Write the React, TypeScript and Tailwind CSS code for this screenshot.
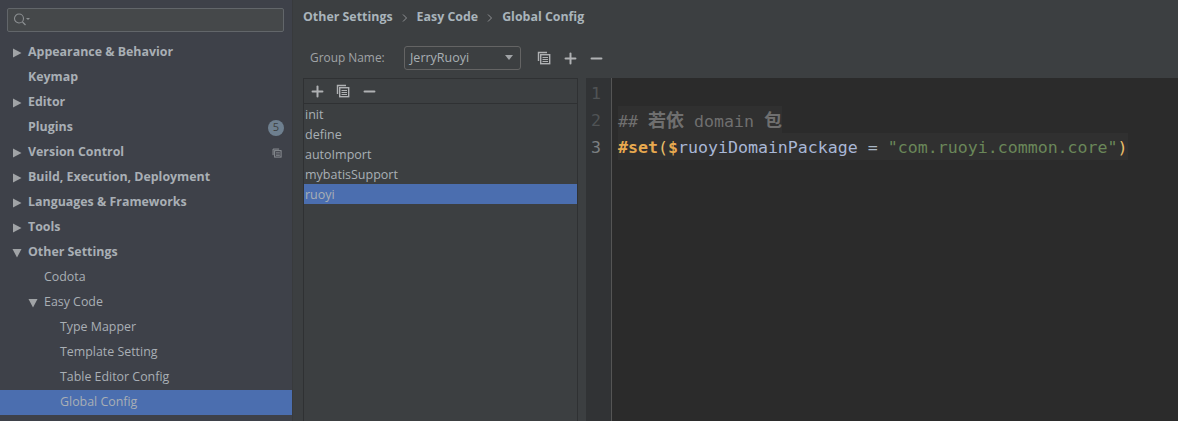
import { Minus, Plus } from 'lucide-react';

const ui = "font-['Open_Sans','Noto_Sans',sans-serif]";

function Arrow({ open }: { open?: boolean }) {
  return (
    <svg width="10" height="10" viewBox="0 0 10 10" className="shrink-0">
      {open ? <path d="M.5 1h9L5 9.5z" fill="#a0a3a6" /> : <path d="M1 .5v9L9.5 5z" fill="#a0a3a6" />}
    </svg>
  );
}

function CopyIcon({ size = 14, color = '#afb1b3' }: { size?: number; color?: string }) {
  return (
    <svg width={size} height={size} viewBox="0 0 14 14" fill="none" stroke={color}>
      <path d="M1.5 10V1.5H10" strokeWidth="1.4" />
      <rect x="3.7" y="3.7" width="9" height="9" strokeWidth="1.4" />
      <path d="M5.5 6.5h5.5M5.5 8.5h5.5M5.5 10.5h5.5" strokeWidth="1" />
    </svg>
  );
}

function IconSlot({ children }: { children: React.ReactNode }) {
  return <span className="flex w-[26px] items-center justify-center">{children}</span>;
}

function TreeRow({
  label,
  indent = 0,
  bold,
  arrow,
  selected,
  children,
}: {
  label: string;
  indent?: number;
  bold?: boolean;
  arrow?: 'open' | 'closed';
  selected?: boolean;
  children?: React.ReactNode;
}) {
  return (
    <div
      className={`flex h-[25px] items-center pr-2 text-[12.4px] ${bold ? 'font-bold' : ''} ${selected ? 'bg-[#4b6eaf]' : ''}`}
      style={{ paddingLeft: 12 + indent }}
    >
      <span className="w-4">{arrow && <Arrow open={arrow === 'open'} />}</span>
      <span className="flex-1">{label}</span>
      {children}
    </div>
  );
}

function Sidebar() {
  return (
    <div className="flex h-full w-[292px] shrink-0 flex-col bg-[#3e4149] text-[#a9afb5]">
      {/* search */}
      <div className="mx-[7px] mt-2 flex h-6 w-[277px] items-center rounded-[2px] border border-[#62666a] bg-[#45484a] pl-1">
        <svg width="18" height="16" viewBox="0 0 18 16" fill="none" stroke="#8c8f92">
          <circle cx="7" cy="6.5" r="4.5" strokeWidth="1.1" />
          <path d="M10.5 10l3 3" strokeWidth="1.2" />
          <path d="M14 6h4l-2 2z" fill="#8c8f92" stroke="none" />
        </svg>
      </div>
      <div className="mt-2">
        <TreeRow label="Appearance & Behavior" bold arrow="closed" />
        <TreeRow label="Keymap" bold />
        <TreeRow label="Editor" bold arrow="closed" />
        <TreeRow label="Plugins" bold>
          <span className="flex h-4 w-4 items-center justify-center rounded-full bg-[#6e7f8f] text-[11px] font-normal text-[#3c3f41]">
            5
          </span>
        </TreeRow>
        <TreeRow label="Version Control" bold arrow="closed">
          <span className="mr-[2px]">
            <CopyIcon size={10} color="#8c9095" />
          </span>
        </TreeRow>
        <TreeRow label="Build, Execution, Deployment" bold arrow="closed" />
        <TreeRow label="Languages & Frameworks" bold arrow="closed" />
        <TreeRow label="Tools" bold arrow="closed" />
        <TreeRow label="Other Settings" bold arrow="open" />
        <TreeRow label="Codota" indent={16} />
        <TreeRow label="Easy Code" indent={16} arrow="open" />
        <TreeRow label="Type Mapper" indent={32} />
        <TreeRow label="Template Setting" indent={32} />
        <TreeRow label="Table Editor Config" indent={32} />
        <TreeRow label="Global Config" indent={32} selected />
      </div>
    </div>
  );
}

function Crumb() {
  return (
    <svg width="6" height="8" viewBox="0 0 6 8" fill="none" stroke="#8f9295" className="mx-[9px]">
      <path d="M1 .5L4.5 4 1 7.5" />
    </svg>
  );
}

function TemplateList() {
  const items = ['init', 'define', 'autoImport', 'mybatisSupport', 'ruoyi'];
  return (
    <div className="h-full w-[275px] shrink-0 border border-b-0 border-[#2f3133] bg-[#3c3f41]">
      <div className="flex h-[25px] items-center border-b border-[#2f3133] bg-[#3c3f41] text-[#afb1b3]">
        <IconSlot>
          <Plus size={17} strokeWidth={2.8} />
        </IconSlot>
        <IconSlot>
          <CopyIcon />
        </IconSlot>
        <IconSlot>
          <Minus size={17} strokeWidth={2.8} />
        </IconSlot>
      </div>
      <div className="text-[12.5px] text-[#a9b0b5]">
        {items.map((item) => (
          <div
            key={item}
            className={`flex h-5 items-center pl-px pt-[2px] ${item === 'ruoyi' ? 'bg-[#4b6eaf]' : ''}`}
          >
            {item}
          </div>
        ))}
      </div>
    </div>
  );
}

function Editor() {
  return (
    <div className="ml-2 flex h-full flex-1 bg-[#2b2b2b] font-['DejaVu_Sans_Mono','Noto_Sans_CJK_SC',monospace] text-[16.6px] leading-[27px]">
      <div className="w-[26px] shrink-0 border-r border-[#555555] bg-[#313335] pl-[5px] pt-[2px] text-[#606366]">
        <div className="text-[#505355]">1</div>
        <div className="text-[#505355]">2</div>
        <div className="text-[#7d8083]">3</div>
      </div>
      <div className="pl-[6px] pt-px">
        <div className="h-[27px]" />
        <div className="h-[27px] w-fit whitespace-pre bg-[#303030] leading-[29px] text-[#6f6f6f]">
          ## <span className="text-[18px] font-bold">若依</span> domain <span className="text-[18px] font-bold">包</span>
        </div>
        <div className="h-[27px] w-fit whitespace-pre bg-[#303030] leading-[29px] text-[#a9b7c6]">
          <span className="font-bold text-[#e8a94f]">#set</span>
          <span className="text-[#e8bf6a]">(</span>
          <span className="font-bold text-[#e8a94f]">$</span>
          <span className="text-[#a9b7d6]">ruoyiDomainPackage</span> = <span className="text-[#6a8759]">"com.ruoyi.common.core"</span>
          <span className="text-[#e8bf6a]">)</span>
        </div>
      </div>
    </div>
  );
}

export default function App() {
  return (
    <div className={`flex h-[421px] w-[1178px] overflow-hidden bg-[#3c3f41] ${ui}`}>
      <Sidebar />
      <div className="w-px shrink-0 bg-[#383a3c]" />
      <div className="flex min-w-0 flex-1 flex-col">
        {/* breadcrumb */}
        <div className="flex h-[33px] items-center pl-[10px] pt-[2px] text-[12.4px] font-bold text-[#a9b4bb]">
          Other Settings
          <Crumb />
          Easy Code
          <Crumb />
          Global Config
        </div>
        {/* group row */}
        <div className="mt-[13px] flex h-6 items-center pl-[17px] text-[11.9px] text-[#a0a3a6]">
          <span className="w-[94px]">Group Name:</span>
          <div className="flex h-6 w-[117px] items-center justify-between rounded-[3px] border border-[#646464] bg-[#3c3f41] pl-[5px] pr-[6px] text-[12.5px] text-[#a9b0b5]">
            JerryRuoyi
            <svg width="10" height="6" viewBox="0 0 10 6">
              <path d="M1 0h8L5 5z" fill="#a0a3a6" />
            </svg>
          </div>
          <div className="ml-[10px] flex items-center text-[#afb1b3]">
            <IconSlot>
              <CopyIcon />
            </IconSlot>
            <IconSlot>
              <Plus size={17} strokeWidth={2.8} />
            </IconSlot>
            <IconSlot>
              <Minus size={17} strokeWidth={2.8} />
            </IconSlot>
          </div>
        </div>
        {/* body */}
        <div className="mt-2 flex min-h-0 flex-1 pl-[10px]">
          <TemplateList />
          <Editor />
        </div>
      </div>
    </div>
  );
}
